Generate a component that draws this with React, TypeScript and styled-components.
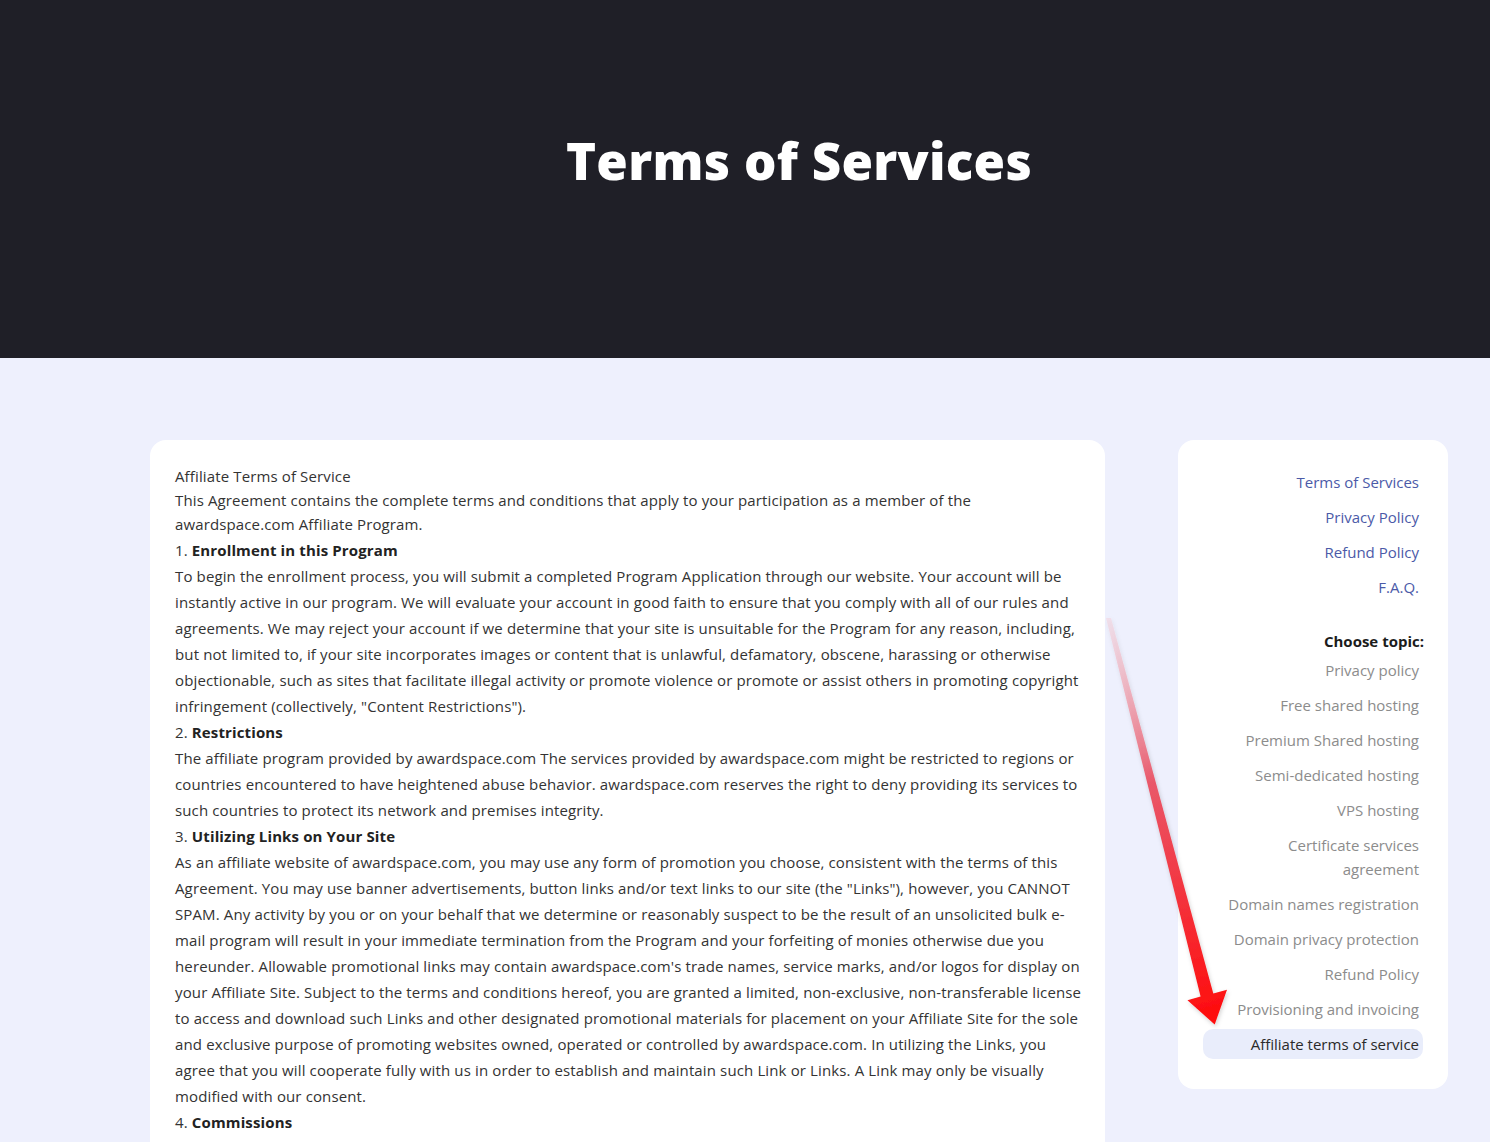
import styled, { createGlobalStyle } from "styled-components";

const GlobalStyle = createGlobalStyle`
  html, body {
    margin: 0;
    padding: 0;
    background: #eef0fd;
  }
  * {
    box-sizing: border-box;
  }
`;

type Para = { heading?: [string, string]; lines?: string[]; tight?: boolean };

const content: Para[] = [
  { lines: ["Affiliate Terms of Service"], tight: true },
  {
    lines: [
      "This Agreement contains the complete terms and conditions that apply to your participation as a member of the",
      "awardspace.com Affiliate Program.",
    ],
    tight: true,
  },
  { heading: ["1.", "Enrollment in this Program"] },
  {
    lines: [
      "To begin the enrollment process, you will submit a completed Program Application through our website. Your account will be",
      "instantly active in our program. We will evaluate your account in good faith to ensure that you comply with all of our rules and",
      "agreements. We may reject your account if we determine that your site is unsuitable for the Program for any reason, including,",
      "but not limited to, if your site incorporates images or content that is unlawful, defamatory, obscene, harassing or otherwise",
      "objectionable, such as sites that facilitate illegal activity or promote violence or promote or assist others in promoting copyright",
      'infringement (collectively, "Content Restrictions").',
    ],
  },
  { heading: ["2.", "Restrictions"] },
  {
    lines: [
      "The affiliate program provided by awardspace.com The services provided by awardspace.com might be restricted to regions or",
      "countries encountered to have heightened abuse behavior. awardspace.com reserves the right to deny providing its services to",
      "such countries to protect its network and premises integrity.",
    ],
  },
  { heading: ["3.", "Utilizing Links on Your Site"] },
  {
    lines: [
      "As an affiliate website of awardspace.com, you may use any form of promotion you choose, consistent with the terms of this",
      'Agreement. You may use banner advertisements, button links and/or text links to our site (the "Links"), however, you CANNOT',
      "SPAM. Any activity by you or on your behalf that we determine or reasonably suspect to be the result of an unsolicited bulk e-",
      "mail program will result in your immediate termination from the Program and your forfeiting of monies otherwise due you",
      "hereunder. Allowable promotional links may contain awardspace.com's trade names, service marks, and/or logos for display on",
      "your Affiliate Site. Subject to the terms and conditions hereof, you are granted a limited, non-exclusive, non-transferable license",
      "to access and download such Links and other designated promotional materials for placement on your Affiliate Site for the sole",
      "and exclusive purpose of promoting websites owned, operated or controlled by awardspace.com. In utilizing the Links, you",
      "agree that you will cooperate fully with us in order to establish and maintain such Link or Links. A Link may only be visually",
      "modified with our consent.",
    ],
  },
  { heading: ["4.", "Commissions"] },
];

const mainLinks = ["Terms of Services", "Privacy Policy", "Refund Policy", "F.A.Q."];

const topics = [
  "Privacy policy",
  "Free shared hosting",
  "Premium Shared hosting",
  "Semi-dedicated hosting",
  "VPS hosting",
  "Certificate services agreement",
  "Domain names registration",
  "Domain privacy protection",
  "Refund Policy",
  "Provisioning and invoicing",
  "Affiliate terms of service",
];

export default function App() {
  return (
    <Page>
      <GlobalStyle />
      <Hero>
        <Title>Terms of Services</Title>
      </Hero>
      <Body>
        <Article>
          {content.map((p, i) =>
            p.heading ? (
              <Heading key={i}>
                {p.heading[0]} <strong>{p.heading[1]}</strong>
              </Heading>
            ) : (
              <Paragraph key={i} $tight={p.tight}>
                {p.lines!.map((l, j) => (
                  <Line key={j}>{l}</Line>
                ))}
              </Paragraph>
            )
          )}
        </Article>
        <Sidebar>
          <LinkList>
            {mainLinks.map((l) => (
              <MainLink key={l} href="#">
                {l}
              </MainLink>
            ))}
          </LinkList>
          <TopicTitle>Choose topic:</TopicTitle>
          <TopicList>
            {topics.map((t) => (
              <Topic key={t} href="#" $active={t === "Affiliate terms of service"}>
                {t === "Certificate services agreement" ? (
                  <>
                    Certificate services
                    <br />
                    agreement
                  </>
                ) : (
                  t
                )}
              </Topic>
            ))}
          </TopicList>
        </Sidebar>
      </Body>
      <Arrow viewBox="0 0 1490 1142" width="1490" height="1142">
        <defs>
          <linearGradient id="arrowGrad" x1="1108" y1="620" x2="1215" y2="1025" gradientUnits="userSpaceOnUse">
            <stop offset="0" stopColor="#f7c3cc" stopOpacity="0.35" />
            <stop offset="0.4" stopColor="#e9586a" />
            <stop offset="1" stopColor="#ff0a0a" />
          </linearGradient>
          <filter id="arrowShadow" x="-20%" y="-20%" width="140%" height="140%">
            <feDropShadow dx="1" dy="2" stdDeviation="2" floodColor="#000" floodOpacity="0.18" />
          </filter>
        </defs>
        <polygon
          points="1106,618 1111,618 1213.3,993.4 1227,989.7 1214.7,1024.5 1187.5,1000.3 1200.6,996.6"
          fill="url(#arrowGrad)"
          filter="url(#arrowShadow)"
        />
      </Arrow>
    </Page>
  );
}

const Page = styled.div`
  position: relative;
  width: 1490px;
  height: 1142px;
  overflow: hidden;
  font-family: "Open Sans", "Liberation Sans", sans-serif;
  background: #eef0fd;
`;

const Hero = styled.header`
  height: 358px;
  background: #1f1f27;
  padding: 126px 42px 0 150px;
  display: flex;
  justify-content: center;
  align-items: flex-start;
`;

const Title = styled.h1`
  margin: 0;
  color: #ffffff;
  font-family: "Open Sans", sans-serif;
  font-weight: 800;
  font-size: 51px;
  line-height: 68px;
  letter-spacing: 0.3px;
`;

const Body = styled.main`
  display: grid;
  grid-template-columns: 955px 270px;
  column-gap: 73px;
  align-items: start;
  padding: 82px 42px 0 150px;
`;

const Article = styled.article`
  background: #ffffff;
  border-radius: 16px 16px 0 0;
  padding: 24px 25px 40px 25px;
  min-height: 760px;
  color: #333333;
  font-size: 15px;
  letter-spacing: 0.13px;
`;

const Paragraph = styled.p<{ $tight?: boolean }>`
  margin: 0;
  line-height: ${(p) => (p.$tight ? "24px" : "26px")};
`;

const Line = styled.span`
  display: block;
  white-space: nowrap;
`;

const Heading = styled.p`
  margin: 0;
  line-height: 26px;
  color: #333333;

  &:nth-child(3) {
    margin-top: 1px;
  }

  strong {
    font-weight: 700;
    color: #222222;
  }
`;

const Sidebar = styled.aside`
  background: #ffffff;
  border-radius: 16px;
  padding: 32px 29px 30px 25px;
  display: flex;
  flex-direction: column;
  align-items: flex-end;
  text-align: right;
  font-size: 15px;
`;

const LinkList = styled.nav`
  display: flex;
  flex-direction: column;
  align-items: flex-end;
  gap: 14px;
`;

const MainLink = styled.a`
  color: #4b5aa8;
  text-decoration: none;
  line-height: 21px;
`;

const TopicTitle = styled.h3`
  margin: 31px -5px 0 0;
  font-size: 15px;
  line-height: 24px;
  font-weight: 700;
  color: #1c1c1c;
`;

const TopicList = styled.nav`
  display: flex;
  flex-direction: column;
  align-items: stretch;
  gap: 11px;
  width: 100%;
  margin-top: 5px;
`;

const Topic = styled.a<{ $active?: boolean }>`
  display: block;
  text-align: right;
  text-decoration: none;
  line-height: 24px;
  color: ${(p) => (p.$active ? "#2a2a2a" : "#8c8c8c")};
  background: ${(p) => (p.$active ? "#e9edfb" : "transparent")};
  border-radius: 10px;
  padding: ${(p) => (p.$active ? "3px 4px 3px 0" : "0")};
  margin: ${(p) => (p.$active ? "-3px -4px 0 0" : "0")};
`;

const Arrow = styled.svg`
  position: absolute;
  top: 0;
  left: 0;
  pointer-events: none;
`;
